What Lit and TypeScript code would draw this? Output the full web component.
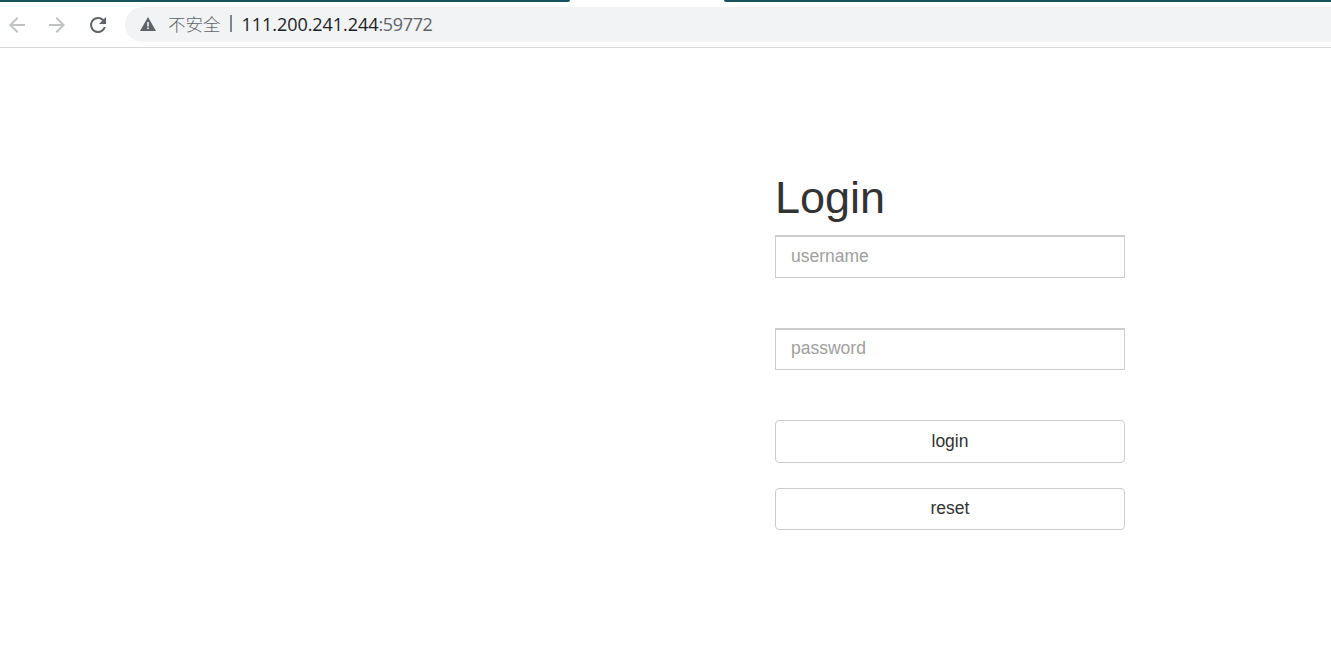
import { LitElement, html, css } from "lit";
import { customElement } from "lit/decorators.js";

@customElement("app-root")
export class AppRoot extends LitElement {
  static styles = css`
    :host { display: block; width: 1331px; height: 653px; background: #fff; overflow: hidden; font-family: "Liberation Sans", Arial, sans-serif; }
    .tabs { height: 7px; display: flex; align-items: flex-start; }
    .band { height: 2px; background: #17535c; }
    .band.l { flex: 0 0 570px; border-bottom-right-radius: 6px; }
    .band.r { flex: 1; border-bottom-left-radius: 6px; }
    .gap { width: 154px; flex: none; }
    .toolbar { height: 40px; border-bottom: 1px solid #d8d8d8; display: flex; align-items: flex-start; }
    .navs { display: flex; width: 125px; height: 35px; align-items: center; flex: none; padding-left: 5px; box-sizing: border-box; gap: 16px; }
    .navs svg { width: 24px; height: 24px; flex: none; display: block; }
    .navs svg.reload { margin-left: 1px; }
    .omni { flex: 1; height: 35px; box-sizing: border-box; padding: 0 0 2px 14px; background: #f1f3f4; border-radius: 18px 0 0 18px; display: flex; align-items: center; font-size: 18px; font-family: "Open Sans", "Noto Sans CJK SC", sans-serif; color: #5f6368; white-space: nowrap; }
    .warn { width: 18px; height: 18px; flex: none; margin-right: 11px; }
    .zh { font-family: "Noto Sans CJK SC", sans-serif; font-size: 17.5px; font-weight: 300; }
    .sep { width: 2px; height: 17px; background: #80868b; margin: 0 10px 0 9px; flex: none; }
    .host { color: #202124; font-size: 18px; letter-spacing: -0.05px; }
    .port { color: #5f6368; font-size: 18px; letter-spacing: -0.35px; }
    main { display: flex; padding: 121px 0 0 775px; }
    form { width: 350px; display: flex; flex-direction: column; }
    h1 { margin: 0 0 8px; font-size: 45px; font-weight: 400; line-height: 58px; color: #333; height: 58px; }
    input { box-sizing: border-box; width: 100%; height: 43px; border: 1px solid #ccc; border-top-width: 2px; padding: 0 15px 2px; font: 17.5px "Liberation Sans", Arial, sans-serif; color: #333; background: #fff; outline: none; border-radius: 0; margin-bottom: 50px; }
    input.p { height: 42px; }
    input::placeholder { color: #a0a0a0; opacity: 1; }
    button { box-sizing: border-box; width: 100%; height: 43px; border: 1px solid #ccc; border-radius: 4px; background: #fff; font: 17.5px "Liberation Sans", Arial, sans-serif; color: #333; padding: 0; }
    button.login { margin-bottom: 25px; }
    button.reset { height: 42px; padding-bottom: 2px; }
  `;
  render() {
    return html`
      <div class="tabs"><div class="band l"></div><div class="gap"></div><div class="band r"></div></div>
      <div class="toolbar">
        <div class="navs">
          <svg viewBox="0 0 24 24" fill="#c0c2c4"><path d="M20 11H7.83l5.59-5.59L12 4l-8 8 8 8 1.41-1.41L7.83 13H20v-2z"/></svg>
          <svg viewBox="0 0 24 24" fill="#c0c2c4"><path d="M4 11h12.17l-5.59-5.59L12 4l8 8-8 8-1.41-1.41L16.17 13H4v-2z"/></svg>
          <svg class="reload" viewBox="0 0 24 24" fill="#5f6368"><path d="M17.65 6.35A7.96 7.96 0 0 0 12 4a8 8 0 1 0 7.75 10h-2.08A6 6 0 1 1 12 6c1.66 0 3.14.69 4.22 1.78L13 11h7V4l-2.35 2.35z"/></svg>
        </div>
        <div class="omni">
          <svg class="warn" viewBox="0 0 18 18" fill="#5f6368"><path d="M1 16 9 2l8 14H1z"/><rect x="8.2" y="7" width="1.6" height="4.5" fill="#f1f3f4"/><rect x="8.2" y="12.5" width="1.6" height="1.6" fill="#f1f3f4"/></svg>
          <span class="zh">不安全</span><span class="sep"></span>
          <span class="host">111.200.241.244</span><span class="port">:59772</span>
        </div>
      </div>
      <main>
        <form @submit=${(e: Event) => e.preventDefault()}>
          <h1>Login</h1>
          <input type="text" placeholder="username" />
          <input class="p" type="password" placeholder="password" />
          <button class="login" type="submit">login</button>
          <button class="reset" type="reset">reset</button>
        </form>
      </main>
    `;
  }
}
